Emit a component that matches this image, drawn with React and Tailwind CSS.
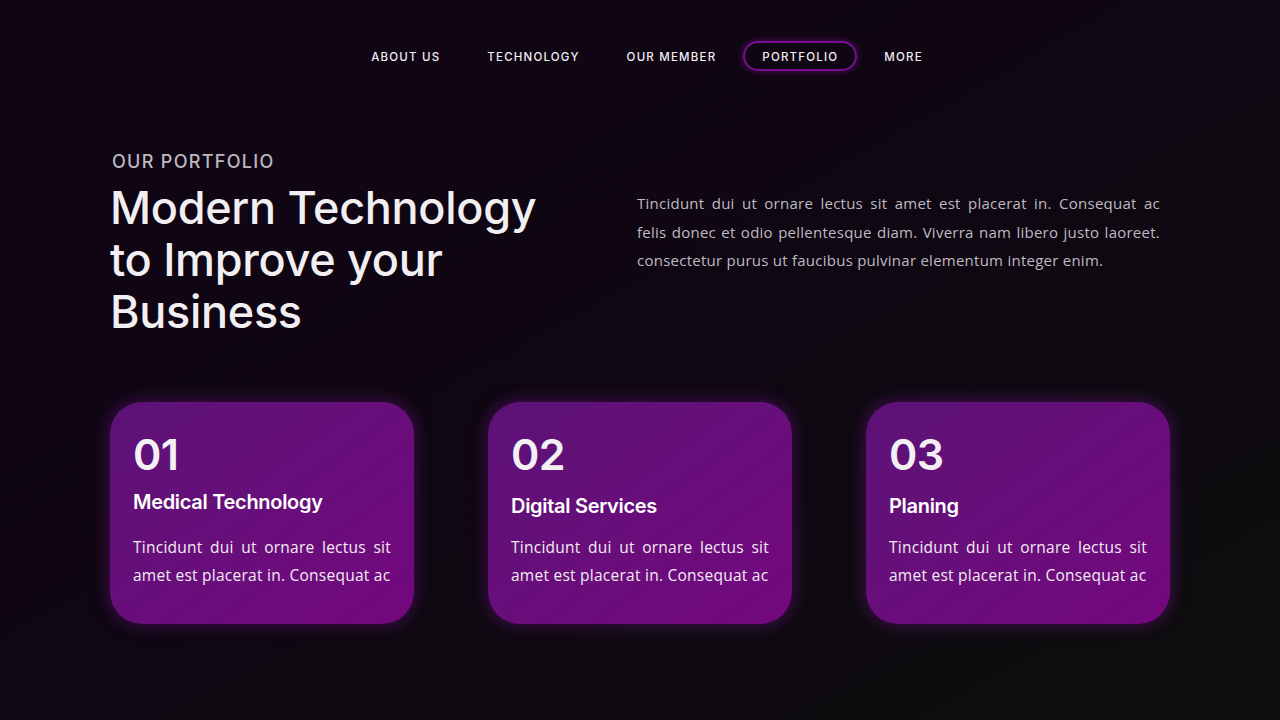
import React from 'react'

const navItems = ['About Us', 'Technology', 'Our Member', 'Portfolio', 'More']

const cards = [
  { num: '01', title: 'Medical Technology', titleClass: 'mt-[10px]', textClass: 'mt-[19px]' },
  { num: '02', title: 'Digital Services', titleClass: 'mt-[14px]', textClass: 'mt-[15px]' },
  { num: '03', title: 'Planing', titleClass: 'mt-[14px]', textClass: 'mt-[15px]' },
]

const head = { fontFamily: 'Inter, "Noto Sans", sans-serif' }
const body = { fontFamily: '"Open Sans", Lato, sans-serif' }

const App = () => {
  return (
    <div className="min-h-[720px] w-full bg-gradient-to-br from-[#110415] via-[#0f0712] to-[#0e0e0e] text-white overflow-hidden">
      <nav className="flex items-center justify-center gap-[7px] pt-[41px] pl-[14px]" style={head}>
        {navItems.map((item) => {
          const active = item === 'Portfolio'
          return (
            <a
              key={item}
              href="#"
              className={
                active
                  ? 'h-[30px] px-[17px] pt-[3px] flex items-center rounded-full border-2 border-[#7a0c90] shadow-[0_0_6px_rgba(150,20,170,0.6)] text-[11.5px] font-medium uppercase tracking-[1.2px] text-[#f0eef1]'
                  : 'h-[30px] px-5 pt-[4px] flex items-center text-[11.5px] font-medium uppercase tracking-[1.2px] text-[#f0eef1]'
              }
            >
              {item}
            </a>
          )
        })}
      </nav>

      <div className="max-w-[1060px] mx-auto">
        <section className="flex justify-between mt-[79px]">
          <div className="w-[470px]">
            <p className="pl-[2px] text-[18px] font-medium uppercase tracking-[1.3px] text-[#bcb8be] leading-[24px]" style={head}>
              Our Portfolio
            </p>
            <h1 className="mt-[8px] text-[45px] font-medium leading-[52px] tracking-[-0.3px] text-[#f2eff3]" style={head}>
              Modern Technology
              <br />
              to Improve your
              <br />
              Business
            </h1>
          </div>
          <div className="w-[523px] mr-[10px] mt-[39px] text-[15px] leading-[28.5px] tracking-[0.25px] text-[#bfbac2]" style={body}>
            <p className="text-justify [text-align-last:justify]">
              Tincidunt dui ut ornare lectus sit amet est placerat in. Consequat ac
            </p>
            <p className="text-justify [text-align-last:justify]">
              felis donec et odio pellentesque diam. Viverra nam libero justo laoreet.
            </p>
            <p>consectetur purus ut faucibus pulvinar elementum integer enim.</p>
          </div>
        </section>

        <section className="grid grid-cols-3 gap-[74px] mt-[64px]">
          {cards.map((card) => (
            <div
              key={card.num}
              className="h-[222px] rounded-[32px] bg-gradient-to-br from-[#5c1276] to-[#74077f] shadow-[0_0_14px_4px_rgba(120,20,150,0.35)] px-[23px] pt-[26px] overflow-hidden"
            >
              <div className="text-[43px] font-semibold leading-[52px] tracking-[-0.5px] text-[#f3f0f4]" style={head}>
                {card.num}
              </div>
              <h3 className={`${card.titleClass} text-[20px] font-semibold leading-[24px] tracking-[-0.3px] text-white`} style={head}>
                {card.title}
              </h3>
              <div className={`${card.textClass} text-[15.5px] leading-[28px] tracking-[0.25px] text-[#f3ecf5]`} style={body}>
                <p className="text-justify [text-align-last:justify]">Tincidunt dui ut ornare lectus sit</p>
                <p className="whitespace-nowrap">amet est placerat in. Consequat ac</p>
              </div>
            </div>
          ))}
        </section>
      </div>
    </div>
  )
}

export default App
